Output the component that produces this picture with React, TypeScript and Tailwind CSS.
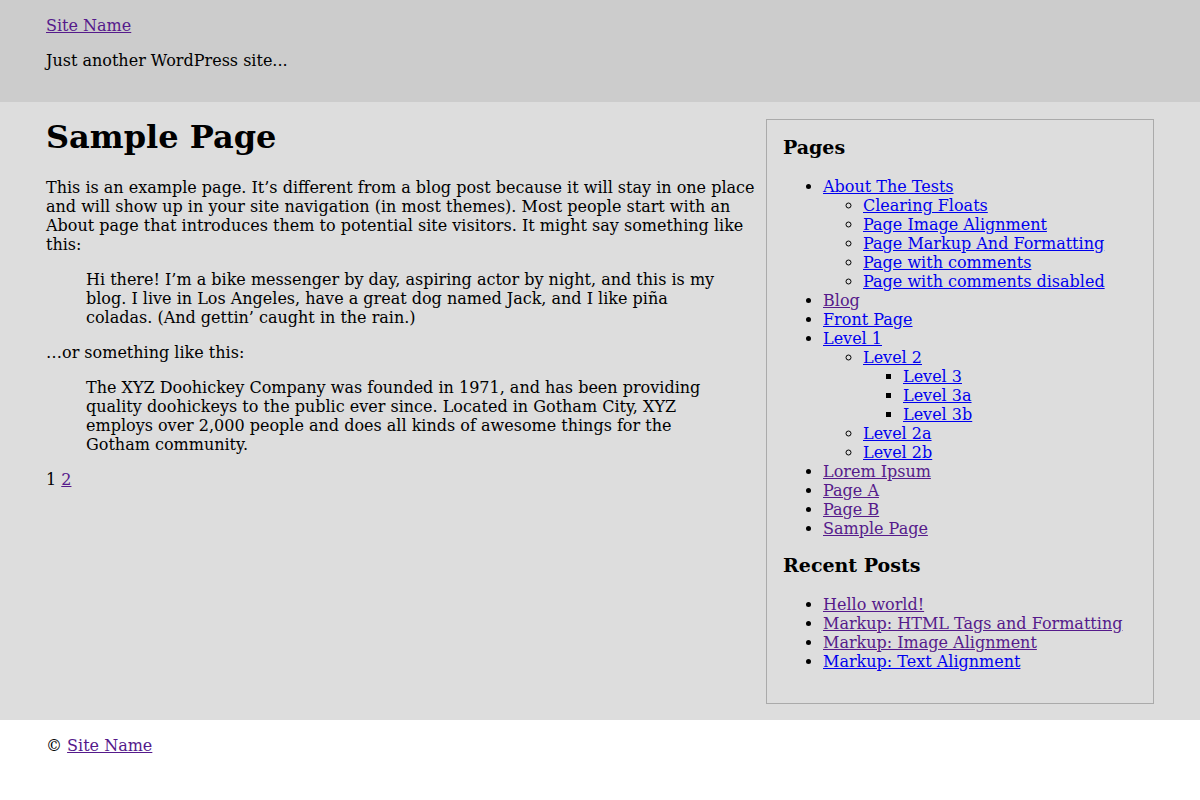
export default function App() {
  const f = { fontFamily: '"DejaVu Serif", serif' };
  const v = "text-[#551a8b] underline";
  const b = "text-[#0000ee] underline";
  return (
    <div style={f} className="min-h-[800px] bg-white text-[16px] leading-[19px] text-black">
      <header className="bg-[#cccccc] px-[46px] pt-[16px] pb-[32px]">
        <p className="mb-[16px]"><a href="#" className={v}>Site Name</a></p>
        <p>Just another WordPress site...</p>
      </header>
      <main className="bg-[#dddddd] pl-[46px] pr-[46px] pt-[17px] pb-[16px] flex">
        <div className="w-[720px]">
          <h1 className="text-[32px] leading-[37px] font-bold mb-[22px]">Sample Page</h1>
          <p className="mb-[16px]">This is an example page. It’s different from a blog post because it will stay in one place and will show up in your site navigation (in most themes). Most people start with an About page that introduces them to potential site visitors. It might say something like this:</p>
          <blockquote className="ml-[40px] mr-[40px] mb-[16px]">Hi there! I’m a bike messenger by day, aspiring actor by night, and this is my blog. I live in Los Angeles, have a great dog named Jack, and I like piña coladas. (And gettin’ caught in the rain.)</blockquote>
          <p className="mb-[16px]">…or something like this:</p>
          <blockquote className="ml-[40px] mr-[40px] mb-[16px]">The XYZ Doohickey Company was founded in 1971, and has been providing quality doohickeys to the public ever since. Located in Gotham City, XYZ employs over 2,000 people and does all kinds of awesome things for the Gotham community.</blockquote>
          <p>1 <a href="#" className={v}>2</a></p>
        </div>
        <aside className="w-[388px] border border-[#aaaaaa] p-[16px]">
          <h2 className="text-[19px] leading-[22px] font-bold mb-[19px]">Pages</h2>
          <ul className="list-disc pl-[40px] mb-[16px]">
            <li><a href="#" className={b}>About The Tests</a>
              <ul className="list-[circle] pl-[40px]">
                <li><a href="#" className={b}>Clearing Floats</a></li>
                <li><a href="#" className={b}>Page Image Alignment</a></li>
                <li><a href="#" className={b}>Page Markup And Formatting</a></li>
                <li><a href="#" className={b}>Page with comments</a></li>
                <li><a href="#" className={b}>Page with comments disabled</a></li>
              </ul>
            </li>
            <li><a href="#" className={v}>Blog</a></li>
            <li><a href="#" className={b}>Front Page</a></li>
            <li><a href="#" className={b}>Level 1</a>
              <ul className="list-[circle] pl-[40px]">
                <li><a href="#" className={b}>Level 2</a>
                  <ul className="list-[square] pl-[40px]">
                    <li><a href="#" className={b}>Level 3</a></li>
                    <li><a href="#" className={b}>Level 3a</a></li>
                    <li><a href="#" className={b}>Level 3b</a></li>
                  </ul>
                </li>
                <li><a href="#" className={b}>Level 2a</a></li>
                <li><a href="#" className={b}>Level 2b</a></li>
              </ul>
            </li>
            <li><a href="#" className={v}>Lorem Ipsum</a></li>
            <li><a href="#" className={v}>Page A</a></li>
            <li><a href="#" className={v}>Page B</a></li>
            <li><a href="#" className={v}>Sample Page</a></li>
          </ul>
          <h2 className="text-[19px] leading-[22px] font-bold mb-[19px]">Recent Posts</h2>
          <ul className="list-disc pl-[40px] mb-[16px]">
            <li><a href="#" className={v}>Hello world!</a></li>
            <li><a href="#" className={v}>Markup: HTML Tags and Formatting</a></li>
            <li><a href="#" className={v}>Markup: Image Alignment</a></li>
            <li><a href="#" className={b}>Markup: Text Alignment</a></li>
          </ul>
        </aside>
      </main>
      <footer className="bg-white px-[46px] py-[16px]">
        <p>© <a href="#" className={v}>Site Name</a></p>
      </footer>
    </div>
  );
}
